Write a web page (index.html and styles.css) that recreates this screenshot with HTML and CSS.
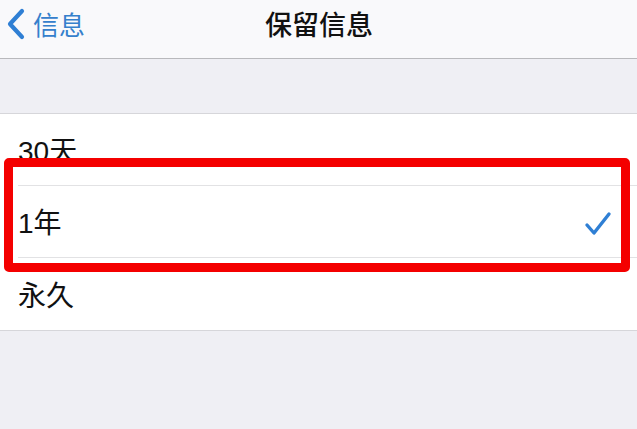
FILE: index.html
```html
<!DOCTYPE html>
<html lang="zh">
<head>
<meta charset="utf-8">
<link rel="stylesheet" href="styles.css">
</head>
<body>
<div class="screen">
  <header class="nav">
    <div class="back">
      <svg class="chev" width="22" height="32" viewBox="0 0 22 32"><path d="M17 3 L5 16 L17 29" fill="none" stroke="#2f7fd4" stroke-width="4.2" stroke-linecap="round" stroke-linejoin="round"/></svg>
      <span class="back-label">信息</span>
    </div>
    <div class="title">保留信息</div>
  </header>
  <div class="spacer"></div>
  <ul class="list">
    <li class="row"><span class="label">30天</span></li>
    <li class="row"><span class="label">1年</span>
      <svg class="check" width="28" height="26" viewBox="0 0 28 26"><path d="M3 14 L10 22 L25 3" fill="none" stroke="#2f7fd4" stroke-width="3.4" stroke-linecap="round" stroke-linejoin="round"/></svg>
    </li>
    <li class="row"><span class="label">永久</span></li>
  </ul>
  <div class="highlight"></div>
</div>
</body>
</html>
```
FILE: styles.css
```css
* { box-sizing: border-box; }
html, body { margin: 0; padding: 0; }
body {
  width: 637px;
  height: 429px;
  overflow: hidden;
  background: #efeff4;
  font-family: "Liberation Sans", "Noto Sans CJK SC", sans-serif;
}
.screen {
  position: relative;
  width: 637px;
  height: 429px;
}
.nav {
  position: relative;
  height: 59px;
  background: #f9f9fb;
  border-bottom: 1px solid #b9b9bc;
  display: flex;
  align-items: center;
}
.back {
  display: flex;
  align-items: center;
  padding-left: 5px;
  margin-top: -11px;
  color: #3580cc;
}
.chev { display: block; }
.back-label {
  font-family: "Noto Sans CJK SC", sans-serif;
  font-size: 26px;
  margin-left: 6px;
  line-height: 1;
}
.title {
  position: absolute;
  left: 0;
  right: 0;
  top: 10px;
  text-align: center;
  font-family: "Noto Sans CJK SC", sans-serif;
  font-size: 27px;
  font-weight: 500;
  color: #111;
  line-height: 1;
  padding-left: 1px;
}
.spacer {
  height: 55px;
  border-bottom: 1px solid #d6d6da;
}
.list {
  list-style: none;
  margin: 0;
  padding: 0 0 0 18px;
  background: #fff;
  border-bottom: 1px solid #d6d6da;
}
.row {
  height: 72px;
  display: flex;
  align-items: center;
  justify-content: space-between;
  padding-right: 25px;
  border-bottom: 1px solid #e2e2e4;
}
.row:last-child { border-bottom: none; height: 72px; }
.label {
  font-size: 28px;
  color: #111;
  line-height: 1;
  padding-top: 5px;
}
.check { display: block; margin-top: 5px; }
.highlight {
  position: absolute;
  left: 4px;
  top: 158px;
  width: 626px;
  height: 114px;
  border: 9px solid #f40000;
  border-radius: 5px;
}
```
